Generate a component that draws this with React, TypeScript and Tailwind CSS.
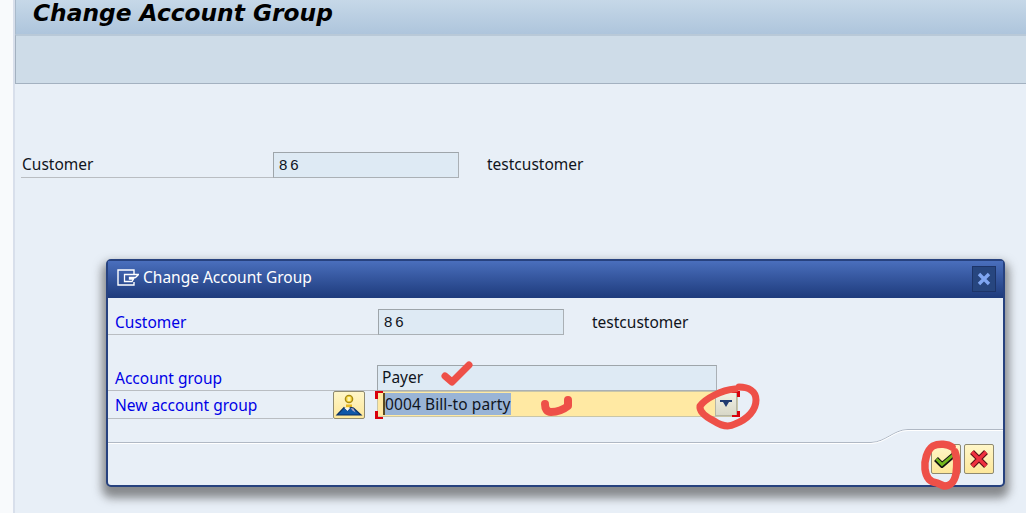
function PopupIcon() {
  return (
    <svg width="22" height="18" viewBox="0 0 22 18" className="shrink-0">
      <path d="M17 6V1H1v15h16v-3" fill="none" stroke="#fff" strokeWidth="1.4" />
      <path d="M7.500 5.500h14l-3 3h-6v1.500h4l-1.500 2.500H7.500z" fill="none" stroke="#fff" strokeWidth="1.300" />
    </svg>
  );
}

function MountainIcon() {
  return (
    <svg width="28" height="26" viewBox="0 0 28 26">
      <circle cx="14" cy="7" r="3.600" fill="#f7d53c" stroke="#a88a14" strokeWidth="1.400" />
      <rect x="12.500" y="5" width="3" height="4" fill="#fff6b0" />
      <path d="M11 12.500h6V15h-6z" fill="#e9b820" />
      <path d="M2 23l7-7.500 3.500 3 3-3 3 .5 7.500 7z" fill="#0f57a8" stroke="#0b2f63" strokeWidth="1.200" />
      <path d="M9 15.500l3.500 3.500 3-3.500-3 1z" fill="#fff" />
      <path d="M15.500 16l3 .5 2 4-3-2z" fill="#b3a6c4" />
    </svg>
  );
}

function ReadOnlyField({ value, width, spaced }: { value: string; width: string; spaced?: boolean }) {
  return (
    <div className={`${width} h-[26px] shrink-0 bg-[#deeaf4] border border-[#aab0b5] border-l-[#9ea5aa] border-t-[#9ea5aa] flex items-center text-[#10141c] ${spaced ? "pl-[5px] tracking-[3px] text-[15px] font-['Liberation_Sans',sans-serif]" : "pl-[4px]"}`}>
      {value}
    </div>
  );
}

function YellowButton({ children }: { children: React.ReactNode }) {
  return (
    <button className="w-[30px] h-[30px] bg-gradient-to-b from-[#fff6c8] to-[#fde79a] border border-[#8f8a70] rounded-[2px] flex items-center justify-center">
      {children}
    </button>
  );
}

export default function App() {
  return (
    <div className="relative w-[1026px] h-[513px] overflow-hidden bg-[#e8eff7] font-['Noto_Sans',sans-serif] text-[15.5px] text-[#10141c]">
      <div className="flex h-full">
        <div className="w-[15px] shrink-0 bg-[#f8fafc] border-r-2 border-[#d8dfeb]" />
        <div className="flex-1 flex flex-col">
          <div className="h-[34px] shrink-0 bg-gradient-to-b from-[#c6d8e8] to-[#aec5dc] border-l border-[#a9bacb] pl-[17px] overflow-hidden">
            <h1 className="font-['DejaVu_Sans',sans-serif] font-bold italic text-[23.300px] leading-[25px] text-black whitespace-nowrap">Change Account Group</h1>
          </div>
          <div className="h-[50px] shrink-0 bg-[#cedce8] border-t-2 border-b border-l border-t-[#b9c9d8] border-b-[#a3b1c0] border-l-[#a3b1c0]" />
          <div className="flex items-end mt-[68px] ml-[6px]">
            <div className="w-[252px] h-[26px] flex items-center pl-[1px] border-b border-[#b9bdc2] shrink-0">Customer</div>
            <ReadOnlyField value="86" width="w-[186px]" spaced />
            <span className="ml-[28px] self-center">testcustomer</span>
          </div>
        </div>
      </div>

      {/* dialog window */}
      <div className="absolute left-[106px] top-[259px] w-[899px] h-[228px] flex flex-col rounded-[5px] border-2 border-[#27427f] bg-[#e8eff7] shadow-[0_7px_10px_4px_rgba(70,70,70,0.6)]">
        <div className="h-[37px] shrink-0 bg-gradient-to-b from-[#4a6fbd] to-[#1e3b7c] flex items-center pl-[9px] pb-[3px] gap-[4px] text-white">
          <PopupIcon />
          <span>Change Account Group</span>
          <div className="ml-auto mr-[7px] mt-[1px] w-[24px] h-[26px] bg-[#27467f] border border-[#1d3468] flex items-center justify-center">
            <svg width="14" height="14" viewBox="0 0 14 14">
              <path d="M2 2l10 10M12 2L2 12" stroke="#7fa6f2" strokeWidth="3.400" />
            </svg>
          </div>
        </div>

        <div className="flex items-end mt-[11px]">
          <div className="w-[270px] h-[26px] flex items-center pl-[7px] pt-[2px] border-b border-[#b9bdc2] text-[#0000e6] shrink-0">Customer</div>
          <ReadOnlyField value="86" width="w-[186px]" spaced />
          <span className="ml-[28px] self-center pt-[1px]">testcustomer</span>
        </div>

        <div className="flex items-end mt-[30px]">
          <div className="w-[269px] h-[26px] flex items-center pl-[7px] pt-[2px] border-b border-[#b9bdc2] text-[#0000e6] shrink-0">Account group</div>
          <ReadOnlyField value="Payer" width="w-[340px]" />
        </div>

        <div className="flex items-start">
          <div className="w-[225px] h-[28px] flex items-center pl-[7px] pt-[3px] border-b border-[#b9bdc2] text-[#0000e6] shrink-0">New account group</div>
          <button className="w-[32px] h-[28px] bg-gradient-to-b from-[#fff6c8] to-[#fde79a] border border-[#8f8a70] rounded-[2px] flex items-center justify-center shrink-0">
            <MountainIcon />
          </button>
          <div className="relative ml-[12px] w-[361px] h-[26px] bg-[#ffe9a3] border border-[#c9c6a8] flex items-center pl-[5px] text-[#10141c]">
            <span className="bg-[#99b4d6] tracking-[0.1px] border-l-2 border-[#5a4a20] leading-[22px] whitespace-nowrap">0004 Bill-to party</span>
            <div className="absolute right-0 top-0 w-[22px] h-[24px] bg-gradient-to-b from-[#f0f0e4] to-[#d8d8c8] border border-[#b5b5a5] flex items-center justify-center">
              <svg width="12" height="8" viewBox="0 0 12 8"><path d="M0 0h12v2H9L6 7 3 2H0z" fill="#1f3a70" /></svg>
            </div>
            <span className="absolute -left-[3px] -top-[1px] w-[8px] h-[8px] border-l-[3px] border-t-[2px] border-[#d8000c]" />
            <span className="absolute -left-[3px] -bottom-[3px] w-[8px] h-[8px] border-l-[3px] border-b-[2px] border-[#d8000c]" />
            <span className="absolute -right-[3px] -top-[1px] w-[8px] h-[6px] border-r-[3px] border-t-[2px] border-[#d8000c]" />
            <span className="absolute -right-[3px] -bottom-[1px] w-[8px] h-[6px] border-r-[3px] border-b-[2px] border-[#d8000c]" />
          </div>
        </div>

        {/* footer rule and buttons */}
        <div className="relative mt-auto h-[57px]">
          <svg className="absolute left-0 top-0" width="895" height="16" viewBox="0 0 895 16">
            <path d="M0 14.500H763C778 14 785 2 800 1.500H895" fill="none" stroke="#b0b8c4" strokeWidth="1" />
            <path d="M0 15.500H763C778 15 785 3 800 2.500H895" fill="none" stroke="#fff" strokeWidth="1" />
          </svg>
          <div className="absolute right-[9px] bottom-[11px] flex gap-[3px]">
            <YellowButton>
              <svg width="24" height="18" viewBox="0 0 24 18"><path d="M2 9l6 6L22 3" fill="none" stroke="#111" strokeWidth="5.500" /><path d="M2.500 9l5.500 5.500L21.500 3" fill="none" stroke="#74b81e" strokeWidth="2.800" /></svg>
            </YellowButton>
            <YellowButton>
              <svg width="20" height="20" viewBox="0 0 20 20"><path d="M3 3l14 14M17 3L3 17" stroke="#5a1018" strokeWidth="5.500" /><path d="M3 3l14 14M17 3L3 17" stroke="#f0303f" strokeWidth="3.200" /></svg>
            </YellowButton>
          </div>
        </div>
      </div>

      {/* hand-drawn red marks over the screenshot */}
      <svg className="absolute left-0 top-0 pointer-events-none" width="1026" height="513" viewBox="0 0 1026 513">
        <g fill="none" stroke="#ee5048" strokeLinecap="round" strokeLinejoin="round">
          <path d="M445 376l7 6 17-17" strokeWidth="7" />
          <path d="M545 404c0 5 2 8 6 8 6 0 12-2 17-6v-6" strokeWidth="8" />
          <path d="M735 389c-14 1-30 10-35 17-1 7 8 12 14 15 6 4 14 7 21 3 13-5 21-14 21-24 0-9-8-13-17-13" strokeWidth="7" />
          <path d="M952 447c-4-3-13-4-19-1-6 4-9 15-8 23 1 8 4 13 12 14l7 3c6 0 10-3 12-12 1-8 1-17-1-22" strokeWidth="7.500" />
        </g>
      </svg>
    </div>
  );
}
